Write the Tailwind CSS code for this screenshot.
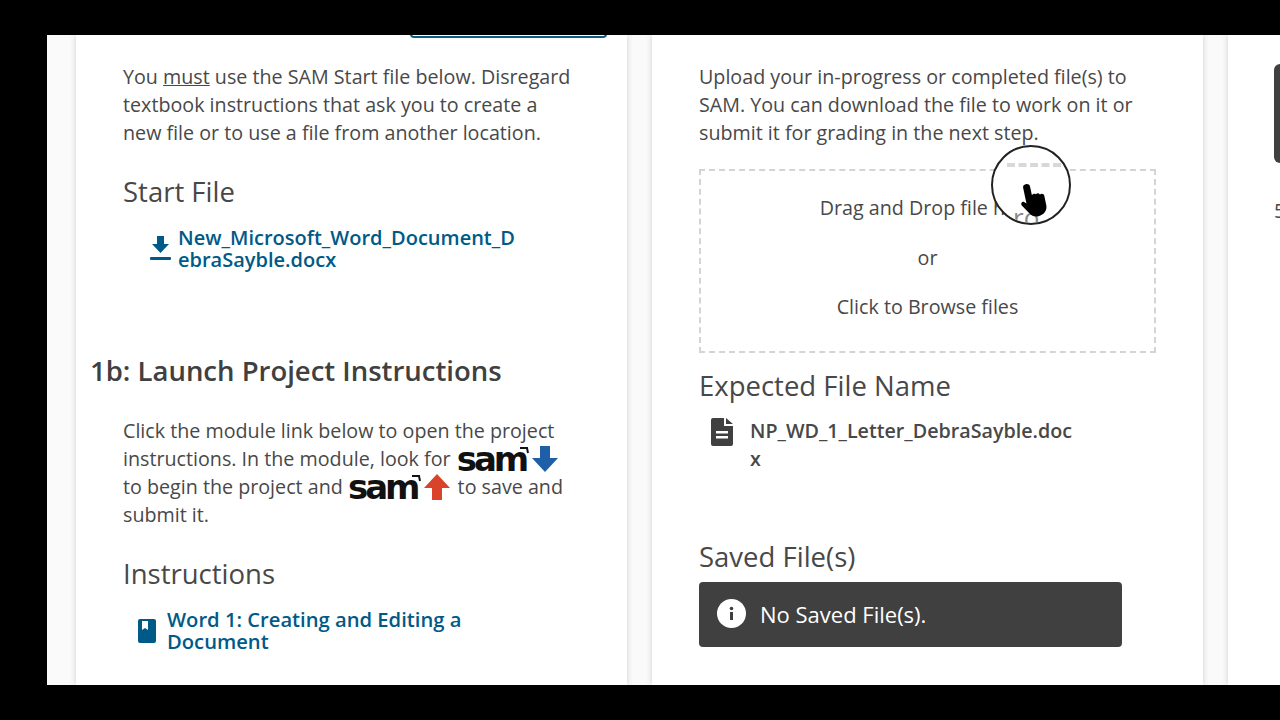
<!DOCTYPE html>
<html lang="en">
<head>
  <meta charset="UTF-8" />
  <title>SAM Project</title>
  <script src="https://cdn.jsdelivr.net/npm/@tailwindcss/browser@4"></script>
</head>
<body class="bg-black font-['Open_Sans',sans-serif] text-[19.7px] leading-[28px] text-[#484848]">
<div class="relative w-[1280px] h-[720px] overflow-hidden pt-[35px] pl-[47px]">
  <main class="flex gap-[25px] w-[1233px] h-[650px] overflow-hidden bg-[#fafafa] pl-[29px]">

    <!-- left card -->
    <section class="relative shrink-0 w-[551px] h-full bg-white shadow-[0_0_6px_rgba(0,0,0,0.18)] pl-[47px] pr-[48px] pt-[28px]">
      <div class="absolute left-[334px] top-[-30px] w-[197px] h-[33px] rounded-[4px] border-2 border-[#0a5c80]"></div>
      <p>You <span class="underline">must</span> use the SAM Start file below. Disregard textbook instructions that ask you to create a new file or to use a file from another location.</p>
      <h3 class="mt-[28px] text-[27.5px] leading-[34px]">Start File</h3>
      <a class="mt-[18px] ml-[27px] flex items-center gap-[7px] text-[#005a87] font-semibold text-[20px] leading-[21.5px]">
        <svg class="w-[21px] h-[28px] shrink-0" viewBox="0 0 21 28" fill="#005a87"><path d="M7 1h7v8h5l-8.500 9-8.500-9h5z"/><rect x="0" y="22" width="21" height="3" rx="1"/></svg>
        <span class="w-[340px] break-all">New_Microsoft_Word_Document_DebraSayble.docx</span>
      </a>
      <h2 class="mt-[83px] -ml-[33px] text-[27.5px] leading-[36px] font-semibold text-[#404040]">1b: Launch Project Instructions</h2>
      <div class="mt-[28px]">
        <p>Click the module link below to open the project instructions. In the module, look for
          <span class="inline-flex items-center align-top h-[28px] ml-[1px]">
            <span class="relative font-['DejaVu_Sans',sans-serif] font-bold text-[#111] text-[34px] leading-[28px] tracking-[-3px]">sam<svg class="absolute right-[-3px] top-[1px] w-[9px] h-[8px]" viewBox="0 0 9 8" fill="none" stroke="#111" stroke-width="2"><path d="M0 2h7l1 5"/></svg></span>
            <svg class="w-[26px] h-[26px] ml-[6px]" viewBox="0 0 26 26" fill="#1f5fa8"><path d="M8 0h10v12h8L13 26 0 12h8z"/></svg>
          </span>
          to begin the project and
          <span class="inline-flex items-center align-top h-[28px] mr-[3px]">
            <span class="relative font-['DejaVu_Sans',sans-serif] font-bold text-[#111] text-[34px] leading-[28px] tracking-[-3px]">sam<svg class="absolute right-[-3px] top-[1px] w-[9px] h-[8px]" viewBox="0 0 9 8" fill="none" stroke="#111" stroke-width="2"><path d="M0 2h7l1 5"/></svg></span>
            <svg class="w-[26px] h-[26px] ml-[6px]" viewBox="0 0 26 26" fill="#d8432a"><path d="M13 0l13 14h-8v12H8V14H0z"/></svg>
          </span>
          to save and submit it.</p>
      </div>
      <h3 class="mt-[28px] text-[27.5px] leading-[34px]">Instructions</h3>
      <a class="mt-[18px] ml-[15px] flex items-center gap-[11px] text-[#005a87] font-semibold text-[20.2px] leading-[21.500px]">
        <svg class="w-[18px] h-[24px] shrink-0" viewBox="0 0 18 24" fill="#005a87"><path fill-rule="evenodd" d="M2 0h14a2 2 0 0 1 2 2v20a2 2 0 0 1-2 2H2a2 2 0 0 1-2-2V2a2 2 0 0 1 2-2zm2 2v9l3-2 3 2V2z"/></svg>
        <span class="w-[320px]">Word 1: Creating and Editing a Document</span>
      </a>
    </section>

    <!-- middle card -->
    <section class="shrink-0 w-[551px] h-full bg-white shadow-[0_0_6px_rgba(0,0,0,0.18)] px-[47px] pt-[28px]">
      <p class="w-[456px]">Upload your in-progress or completed file(s) to SAM. You can download the file to work on it or submit it for grading in the next step.</p>
      <div class="mt-[22px] w-[457px] h-[184px] border-[2.500px] border-dashed border-[#d4d4d4] flex flex-col items-center pt-[23px]">
        <span>Drag and Drop file here</span>
        <span class="mt-[22px]">or</span>
        <span class="mt-[21px]">Click to Browse files</span>
      </div>
      <h3 class="mt-[16px] text-[27.5px] leading-[34px]">Expected File Name</h3>
      <div class="mt-[14px] ml-[11px] flex gap-[16px]">
        <svg class="w-[24px] h-[28px] shrink-0 mt-[1px]" viewBox="0 0 24 28" fill="#404040"><path fill-rule="evenodd" d="M3 0h11v8h9v18a2 2 0 0 1-2 2H3a2 2 0 0 1-2-2V2a2 2 0 0 1 2-2zm13 0l7 6h-7zM6 13v2.500h12V13zm0 5v2.500h12V18z"/></svg>
        <span class="w-[325px] break-all font-semibold">NP_WD_1_Letter_DebraSayble.docx</span>
      </div>
      <h3 class="mt-[67px] text-[27.5px] leading-[34px]">Saved File(s)</h3>
      <div class="mt-[8px] w-[423px] h-[65px] rounded-[4px] bg-[#404040] flex items-center pl-[18px] pb-[2px] gap-[14px] text-white text-[22px]">
        <svg class="w-[29px] h-[29px]" viewBox="0 0 29 29"><circle cx="14.500" cy="14.500" r="14.500" fill="#fff"/><rect x="13" y="13" width="3" height="8" fill="#404040"/><circle cx="14.500" cy="9.500" r="1.800" fill="#404040"/></svg>
        <span>No Saved File(s).</span>
      </div>
    </section>

    <!-- right card, cut off -->
    <section class="shrink-0 w-[200px] h-full bg-white shadow-[0_0_6px_rgba(0,0,0,0.18)] pl-[46px] pt-[29px]">
      <div class="w-[40px] h-[99px] rounded-l-[6px] bg-[#404040]"></div>
      <p class="mt-[34px]">5</p>
    </section>
  </main>

  <!-- cursor highlight -->
  <div class="absolute left-[991px] top-[145px] w-[80px] h-[80px] rounded-full border-2 border-[#222] bg-white overflow-hidden">
    <div class="absolute left-[14px] top-[16px] w-[54px] border-t-[4px] border-dashed border-[#d8d8d8]"></div>
    <span class="absolute left-[20px] top-[56px] text-[26px] leading-[28px] text-[#888]">ro</span>
    <svg class="absolute left-[27px] top-[36px] w-[26px] h-[35px] -rotate-[12deg]" viewBox="0 0 26 35" fill="#000"><path d="M6 3c0-4 7-4 7 0v9c2-1 3-1 4 0 2-1 3-1 4 1 2-1 4 0 4 2v10c0 5-4 9-10 9-4 0-7-2-9-6l-5-8c-1-2 1-4 3-3l2 2z"/></svg>
  </div>
</div>
</body>
</html>
